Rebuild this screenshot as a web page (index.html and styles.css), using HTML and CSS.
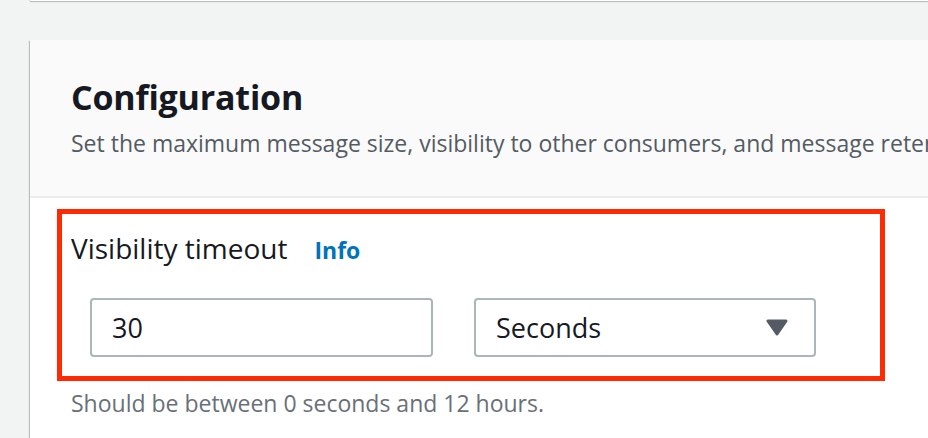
FILE: index.html
```html
<!DOCTYPE html>
<html lang="en">

<head>
    <meta charset="UTF-8">
    <meta name="viewport" content="width=device-width, initial-scale=1.0">
    <title>Configuration</title>
    <link rel="stylesheet" href="styles.css">
</head>

<body>
    <div class="prev-panel"></div>
    <div class="container">
        <div class="panel">
            <div class="panel-header">
                <h2 class="title">Configuration</h2>
                <p class="description">Set the maximum message size, visibility to other consumers, and message retention.</p>
            </div>
            <div class="panel-body">
                <div class="highlight">
                    <div class="label-row">
                        <label for="timeout" class="label">Visibility timeout</label>
                        <a href="#" class="info">Info</a>
                    </div>
                    <div class="field-row">
                        <input type="text" id="timeout" class="input" value="30">
                        <div class="select">
                            <span>Seconds</span>
                            <svg class="caret" width="22" height="17" viewBox="0 0 22 17">
                                <path d="M2 2 L20 2 L11 15 Z" fill="#545b64" stroke="#545b64" stroke-width="3" stroke-linejoin="round"/>
                            </svg>
                        </div>
                    </div>
                </div>
                <p class="hint">Should be between 0 seconds and 12 hours.</p>
            </div>
        </div>
    </div>
</body>

</html>
```

FILE: styles.css
```css
body {
    font-family: "Open Sans", Arial, sans-serif;
    background-color: #f2f3f3;
    margin: 0;
    overflow: hidden;
    height: 438px;
}

.prev-panel {
    margin-left: 30px;
    height: 1px;
    background-color: #ffffff;
    box-shadow: 0 1px 1px 0 rgba(0, 28, 36, 0.3), -1px 0 1px 0 rgba(0, 28, 36, 0.15);
}

.container {
    padding-top: 39px;
    padding-left: 30px;
}

.panel {
    width: 1000px;
    background-color: #fff;
    box-shadow: 0 1px 1px 0 rgba(0, 28, 36, 0.3), -1px 1px 1px 0 rgba(0, 28, 36, 0.2);
}

.panel-header {
    background-color: #fafafa;
    border-bottom: 2px solid #eaeded;
    padding: 37px 41px 0 41px;
    height: 119px;
}

.title {
    margin: 0;
    font-size: 34px;
    line-height: 40px;
    font-weight: 700;
    color: #16191f;
    letter-spacing: -0.2px;
}

.description {
    margin: 10px 0 0 0;
    font-size: 23px;
    line-height: 32px;
    color: #545b64;
    white-space: nowrap;
}

.panel-body {
    padding: 11px 0 40px 27px;
}

.highlight {
    width: 809px;
    border: 5px solid #fe2a03;
    padding: 14px 0 19px 9px;
}

.label-row {
    display: flex;
    align-items: baseline;
    gap: 27px;
    height: 40px;
}

.label {
    font-size: 28px;
    line-height: 40px;
    color: #16191f;
}

.info {
    font-size: 23px;
    font-weight: 700;
    color: #0073bb;
    text-decoration: none;
}

.field-row {
    display: flex;
    gap: 41px;
    margin-top: 30px;
    padding-left: 19px;
}

.input,
.select {
    box-sizing: border-box;
    height: 59px;
    border: 2px solid #aab7b8;
    border-radius: 4px;
    background-color: #fff;
    font-family: inherit;
    font-size: 27px;
    color: #16191f;
    padding: 0 20px;
}

.input {
    width: 343px;
    outline: none;
}

.select {
    width: 342px;
    display: flex;
    align-items: center;
    justify-content: space-between;
    padding-right: 26px;
}

.caret {
    display: block;
}

.hint {
    margin: 6px 0 0 14px;
    font-size: 23px;
    line-height: 32px;
    color: #687078;
}
```
